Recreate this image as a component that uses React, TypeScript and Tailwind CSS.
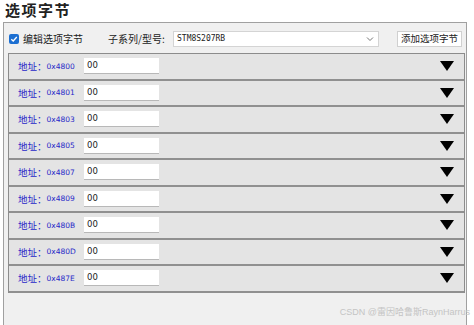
import React from "react";

const addresses = ["0x4800", "0x4801", "0x4803", "0x4805", "0x4807", "0x4809", "0x480B", "0x480D", "0x487E"];

export default function App() {
  return (
    <div className="w-[474px] h-[325px] overflow-hidden bg-white relative font-['Noto_Sans_CJK_SC',sans-serif]">
      {/* Title */}
      <div className="h-[22px] pl-[5px] text-[15px] leading-[20px] font-bold text-[#222] tracking-[1.5px] whitespace-nowrap">选项字节</div>

      {/* Outer group panel */}
      <div className="ml-[3px] w-[464px] h-[303px] border-l border-t border-r border-[#a0a0a0] bg-[#f0f0f0]">
        {/* Header row */}
        <div className="h-[30px] flex items-center pl-[5px] pt-[1px] whitespace-nowrap">
          <span className="shrink-0 w-[10px] h-[10px] rounded-[2px] bg-[#1c6fd1] flex items-center justify-center">
            <svg width="8" height="8" viewBox="0 0 8 8">
              <path d="M1.3 4.2 L3.2 6 L6.8 2" stroke="white" strokeWidth="1.3" fill="none" />
            </svg>
          </span>
          <span className="shrink-0 ml-[4px] w-[56px] text-[10px] text-[#222]">编辑选项字节</span>
          <span className="shrink-0 ml-[29px] w-[60px] text-[10px] text-[#222]">子系列/型号:</span>
          <div className="shrink-0 ml-[5px] w-[206px] h-[16px] bg-white border border-[#d4d4d4] flex items-center pl-[3px] pr-[4px]">
            <span className="flex-1 text-[8px] font-['DejaVu_Sans_Mono',monospace] text-[#222]">STM8S207RB</span>
            <svg width="8" height="6" viewBox="0 0 8 6">
              <path d="M1 1.5 L4 4.5 L7 1.5" stroke="#777" strokeWidth="1" fill="none" />
            </svg>
          </div>
          <div className="shrink-0 ml-[18px] w-[65px] h-[16px] bg-white border border-[#d0d0d0] flex items-center justify-center text-[9.5px] text-[#222]">
            添加选项字节
          </div>
        </div>

        {/* Inner list */}
        <div className="ml-[4px] w-[457px] border-t border-l border-r border-[#8c8c8c]">
          {addresses.map((a) => (
            <div key={a} className="h-[26.5px] flex items-center bg-[#e4e4e4] border-b-2 border-[#909090] whitespace-nowrap">
              <span className="shrink-0 ml-[9px] w-[66px] text-[#2828c8] text-[9.5px] flex items-center">
                地址：<span className="text-[7.5px] font-['DejaVu_Sans',sans-serif]">{a}</span>
              </span>
              <div className="shrink-0 w-[75px] h-[16px] bg-white border-b border-[#b8b8b8] pl-[3px] text-[8.5px] leading-[14px] text-[#222] font-['DejaVu_Sans',sans-serif]">
                00
              </div>
              <div className="flex-1" />
              <svg width="14" height="10" viewBox="0 0 14 10" className="shrink-0 mr-[10px]">
                <path d="M0 0 L14 0 L7 10 Z" fill="#000" />
              </svg>
            </div>
          ))}
        </div>
      </div>

      {/* Watermark */}
      <div className="absolute right-[4px] bottom-[6px] text-[9px] text-[#c4c4c4] whitespace-nowrap font-['Liberation_Sans','Noto_Sans_CJK_SC',sans-serif]">
        CSDN @雷因哈鲁斯RaynHarrus
      </div>
    </div>
  );
}
